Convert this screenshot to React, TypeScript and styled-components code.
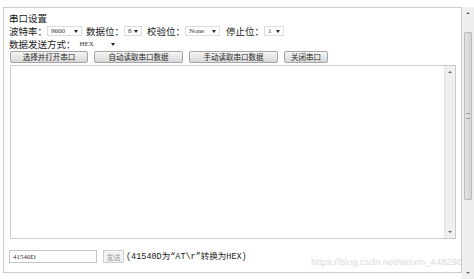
import styled, { createGlobalStyle } from "styled-components";

const GlobalStyle = createGlobalStyle`
  html, body {
    margin: 0;
    padding: 0;
    background: #fff;
    overflow: hidden;
  }
  body {
    font-family: "Noto Sans CJK SC", sans-serif;
  }
`;

const Page = styled.div`
  display: flex;
  align-items: flex-start;
  height: 279px;
  padding: 7px 0 0 3px;
  box-sizing: border-box;
`;

const Frame = styled.div`
  position: relative;
  overflow: hidden;
  width: 460px;
  height: 266px;
  box-sizing: border-box;
  border: 1px solid #cbcbcb;
  padding: 4px 5px 0 5px;
  color: #1a1a1a;
  font-size: 9.5px;
  line-height: 12px;
`;

const Title = styled.div`
  height: 12px;
`;

const Row = styled.div`
  display: flex;
  align-items: center;
  height: 12px;
  margin-top: 1px;
`;

const Label = styled.span<{ $gap?: number }>`
  margin-left: ${(p) => p.$gap ?? 0}px;
  white-space: nowrap;
`;

const Select = styled.div<{ $w: number; $plain?: boolean }>`
  position: relative;
  display: flex;
  align-items: center;
  width: ${(p) => p.$w}px;
  height: 10px;
  box-sizing: border-box;
  padding-left: 3px;
  border: 1px solid ${(p) => (p.$plain ? "transparent" : "#dcdcdc")};
  font-family: "Liberation Serif", serif;
  font-size: 7px;
  color: #333;

  &::after {
    content: "";
    position: absolute;
    right: 3px;
    top: 3px;
    border-left: 2px solid transparent;
    border-right: 2px solid transparent;
    border-top: 3px solid #222;
  }
`;

const ButtonRow = styled.div`
  display: flex;
  gap: 6px;
  margin-top: 1px;
  padding-left: 1px;
`;

const Btn = styled.div<{ $w: number }>`
  display: flex;
  align-items: center;
  justify-content: center;
  width: ${(p) => p.$w}px;
  height: 12px;
  box-sizing: border-box;
  border: 1px solid #a5a5a5;
  border-radius: 2px;
  background: linear-gradient(#f5f5f5, #d8d8d8);
  font-size: 7.5px;
  line-height: 1;
  color: #2a2a2a;
`;

const Output = styled.div`
  display: flex;
  justify-content: flex-end;
  width: 446px;
  height: 174px;
  margin: 2px 0 0 1px;
  box-sizing: border-box;
  border: 1px solid #cccccc;
`;

const Track = styled.div<{ $w: number }>`
  display: flex;
  flex-direction: column;
  align-items: center;
  width: ${(p) => p.$w}px;
  background: #efefef;
  border-left: 1px solid #e2e2e2;
`;

const Arrow = styled.div<{ $down?: boolean }>`
  display: flex;
  align-items: center;
  justify-content: center;
  height: 12px;
  width: 100%;

  &::before {
    content: "";
    border-left: 2px solid transparent;
    border-right: 2px solid transparent;
    ${(p) => (p.$down ? "border-top" : "border-bottom")}: 2px solid #666;
  }
`;

const Fill = styled.div`
  flex: 1;
`;

const Thumb = styled.div`
  display: flex;
  align-items: center;
  justify-content: center;
  width: 8px;
  height: 168px;
  margin-top: 13px;
  box-sizing: border-box;
  border: 1px solid #bdbdbd;
  border-radius: 1px;
  background: linear-gradient(90deg, #e6e6e6, #d2d2d2);

  &::before {
    content: "";
    width: 4px;
    height: 4px;
    border-top: 1px solid #999;
    border-bottom: 1px solid #999;
  }
`;

const SendRow = styled.div`
  display: flex;
  align-items: center;
  margin-top: 11px;
`;

const Input = styled.div`
  display: flex;
  align-items: center;
  width: 88px;
  height: 13px;
  box-sizing: border-box;
  padding-left: 3px;
  border: 1px solid #c6c6c6;
  font-family: "Liberation Serif", serif;
  font-size: 7px;
  color: #333;
`;

const SendBtn = styled.div`
  display: flex;
  align-items: center;
  justify-content: center;
  width: 21px;
  height: 13px;
  margin-left: 6px;
  box-sizing: border-box;
  border: 1px solid #cfcfcf;
  background: #f3f3f3;
  font-size: 7px;
  color: #9a9a9a;
`;

const Hint = styled.span`
  margin-left: 2px;
  font-family: "Liberation Mono", "Noto Sans CJK SC", monospace;
  font-size: 8.5px;
  white-space: nowrap;
`;

const Watermark = styled.div`
  position: absolute;
  left: 307px;
  bottom: 4px;
  font-family: "Liberation Sans", sans-serif;
  font-size: 9.5px;
  color: #dadada;
  white-space: nowrap;
`;

const PageBar = styled(Track)`
  height: 272px;
  border-left: none;
`;

export default function App() {
  return (
    <>
      <GlobalStyle />
      <Page>
        <Frame>
          <Title>串口设置</Title>
          <Row>
            <Label>波特率：</Label>
            <Select $w={35}>9600</Select>
            <Label $gap={4}>数据位：</Label>
            <Select $w={18}>8</Select>
            <Label $gap={5}>校验位：</Label>
            <Select $w={35}>None</Select>
            <Label $gap={6}>停止位：</Label>
            <Select $w={20}>1</Select>
          </Row>
          <Row>
            <Label>数据发送方式：</Label>
            <Select $w={43} $plain>HEX</Select>
          </Row>
          <ButtonRow>
            <Btn $w={78}>选择并打开串口</Btn>
            <Btn $w={89}>自动读取串口数据</Btn>
            <Btn $w={89}>手动读取串口数据</Btn>
            <Btn $w={44}>关闭串口</Btn>
          </ButtonRow>
          <Output>
            <Track $w={10}>
              <Arrow />
              <Fill />
              <Arrow $down />
            </Track>
          </Output>
          <SendRow>
            <Input>41540D</Input>
            <SendBtn>发送</SendBtn>
            <Hint>(41540D为“AT\r”转换为HEX)</Hint>
          </SendRow>
          <Watermark>https://blog.csdn.net/weixin_44829095</Watermark>
        </Frame>
        <PageBar $w={12}>
          <Arrow />
          <Thumb />
          <Fill />
          <Arrow $down />
        </PageBar>
      </Page>
    </>
  );
}
